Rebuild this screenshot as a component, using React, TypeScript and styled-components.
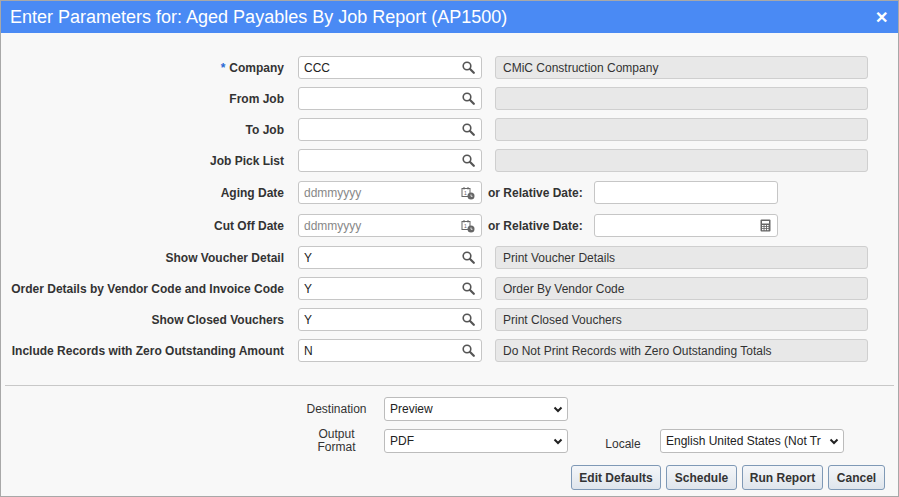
import React from "react";
import styled, { createGlobalStyle } from "styled-components";

const G = createGlobalStyle`
  html,body{margin:0;padding:0;background:#fff;}
  *{box-sizing:border-box;}
  body{font-family:"Liberation Sans",Arial,sans-serif;font-size:12px;color:#333;}
`;
const Win = styled.div`width:899px;height:497px;border:1px solid #a8a8a8;background:#f8f8f8;display:flex;flex-direction:column;`;
const Title = styled.div`height:32px;background:#4a8af4;color:#fff;font-size:18px;display:flex;align-items:center;justify-content:space-between;padding:0 10px 0 9px;flex-shrink:0;`;
const Close = styled.span`font-size:16px;font-weight:bold;`;
const Form = styled.div`padding:19px 0 0 9px;display:flex;flex-direction:column;`;
const Row = styled.div<{ h?: number }>`display:flex;align-items:center;height:${p => p.h ?? 31}px;`;
const Label = styled.div`width:274px;text-align:right;font-weight:bold;margin-right:14px;white-space:nowrap;`;
const Star = styled.span`color:#2a6ad4;margin-right:4px;`;
const Input = styled.div<{ w?: number; ph?: boolean }>`width:${p => p.w ?? 184}px;height:23px;border:1px solid #c6c6c6;border-radius:3px;background:#fff;display:flex;align-items:center;justify-content:space-between;padding:0 6px 0 5px;color:${p => (p.ph ? "#888" : "#222")};`;
const Desc = styled.div`width:373px;height:23px;border:1px solid #cfcfcf;border-radius:3px;background:#e8e8e8;margin-left:13px;display:flex;align-items:center;padding:0 7px;color:#333;`;
const Rel = styled.span`font-weight:bold;margin:0 11px 0 6px;`;
const Sep = styled.div`height:1px;background:#c8c8c8;margin:19px 4px 0 4px;`;
const Bottom = styled.div`display:flex;flex-direction:column;padding-top:11px;`;
const BRow = styled.div`display:flex;align-items:center;`;
const BLabel = styled.div<{ w: number }>`width:${p => p.w}px;text-align:center;margin-right:12px;line-height:13px;color:#333;`;
const Select = styled.div<{ w?: number }>`width:${p => p.w ?? 184}px;height:24px;border:1px solid #bcbcbc;border-radius:3px;background:#fff;display:flex;align-items:center;justify-content:space-between;padding:0 4px 0 5px;color:#222;overflow:hidden;white-space:nowrap;`;
const Buttons = styled.div`display:flex;gap:5px;justify-content:flex-end;padding-right:13px;margin-top:11px;`;
const Btn = styled.button<{ w: number }>`width:${p => p.w}px;height:25px;border:1px solid #7f99b6;border-radius:3px;background:linear-gradient(#f4f6f9,#dfe5ec);font:bold 12px "Liberation Sans",Arial,sans-serif;color:#333;padding:0;`;

const Search = () => (
  <svg width="13" height="13" viewBox="0 0 13 13"><circle cx="5" cy="5" r="3.8" fill="none" stroke="#555" strokeWidth="1.6"/><path d="M8 8l3.8 3.8" stroke="#555" strokeWidth="2.2" strokeLinecap="round"/></svg>
);
const Cal = () => (
  <svg width="14" height="14" viewBox="0 0 14 14"><rect x="1" y="2.5" width="8" height="8" fill="none" stroke="#666" strokeWidth="1"/><path d="M3 1v2.5M7 1v2.5" stroke="#666"/><text x="3" y="9" fontSize="5" fill="#666">1</text><circle cx="10" cy="10" r="3.5" fill="#666"/><path d="M10 8.5v1.8h1.5" stroke="#fff" strokeWidth="0.8" fill="none"/></svg>
);
const Calc = () => (
  <svg width="11" height="13" viewBox="0 0 11 13"><rect x="0.5" y="0.5" width="10" height="12" rx="1" fill="#666"/><rect x="2" y="2" width="7" height="2.5" fill="#fff"/>{[0,1,2].map(r=>[0,1,2].map(c=><rect key={r+"-"+c} x={2+c*2.5} y={6+r*2} width="1.6" height="1.2" fill="#fff"/>))}</svg>
);
const Chev = () => (
  <svg width="10" height="7" viewBox="0 0 10 7"><path d="M1.5 1.5l3.5 3.5 3.5-3.5" fill="none" stroke="#222" strokeWidth="2"/></svg>
);

const lookups: [string, string, string, boolean?][] = [
  ["Company", "CCC", "CMiC Construction Company", true],
  ["From Job", "", ""],
  ["To Job", "", ""],
  ["Job Pick List", "", ""],
];
const lookups2: [string, string, string][] = [
  ["Show Voucher Detail", "Y", "Print Voucher Details"],
  ["Order Details by Vendor Code and Invoice Code", "Y", "Order By Vendor Code"],
  ["Show Closed Vouchers", "Y", "Print Closed Vouchers"],
  ["Include Records with Zero Outstanding Amount", "N", "Do Not Print Records with Zero Outstanding Totals"],
];

export default function App() {
  return (
    <>
      <G />
      <Win>
        <Title>Enter Parameters for: Aged Payables By Job Report (AP1500)<Close>✕</Close></Title>
        <Form>
          {lookups.map(([l, v, d, req]) => (
            <Row key={l}>
              <Label>{req && <Star>*</Star>}{l}</Label>
              <Input><span>{v}</span><Search /></Input>
              <Desc>{d}</Desc>
            </Row>
          ))}
          <Row h={33}>
            <Label>Aging Date</Label>
            <Input ph><span>ddmmyyyy</span><Cal /></Input>
            <Rel>or Relative Date:</Rel>
            <Input />
          </Row>
          <Row h={33}>
            <Label>Cut Off Date</Label>
            <Input ph><span>ddmmyyyy</span><Cal /></Input>
            <Rel>or Relative Date:</Rel>
            <Input><span /><Calc /></Input>
          </Row>
          {lookups2.map(([l, v, d]) => (
            <Row key={l}>
              <Label>{l}</Label>
              <Input><span>{v}</span><Search /></Input>
              <Desc>{d}</Desc>
            </Row>
          ))}
        </Form>
        <Sep />
        <Bottom>
          <BRow style={{ paddingLeft: 300 }}>
            <BLabel w={71}>Destination</BLabel>
            <Select><span>Preview</span><Chev /></Select>
          </BRow>
          <BRow style={{ paddingLeft: 300, marginTop: 7 }}>
            <BLabel w={71}>Output<br />Format</BLabel>
            <Select><span>PDF</span><Chev /></Select>
            <BLabel w={50} style={{ marginLeft: 30, marginRight: 12, paddingTop: 6 }}>Locale</BLabel>
            <Select><span>English United States (Not Tr</span><Chev /></Select>
          </BRow>
          <Buttons>
            <Btn w={90}>Edit Defaults</Btn>
            <Btn w={71}>Schedule</Btn>
            <Btn w={81}>Run Report</Btn>
            <Btn w={57}>Cancel</Btn>
          </Buttons>
        </Bottom>
      </Win>
    </>
  );
}
